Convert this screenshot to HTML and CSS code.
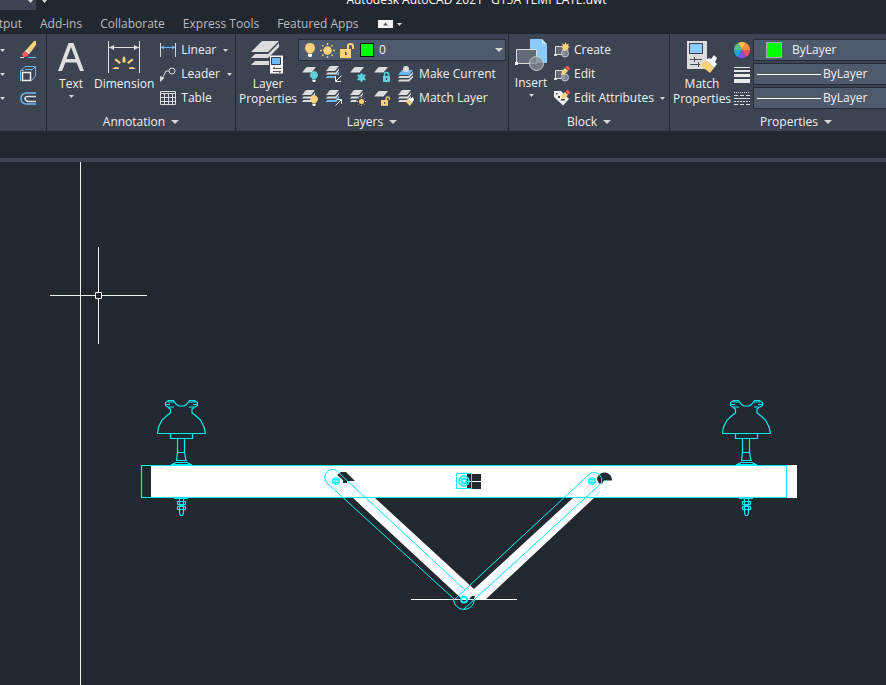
FILE: index.html
```html
<!DOCTYPE html>
<html lang="en">
<head>
<meta charset="utf-8">
<title>Autodesk AutoCAD 2021 - G15A TEMPLATE.dwt</title>
<link rel="stylesheet" href="styles.css">
</head>
<body>
<svg class="defs" aria-hidden="true">
  <symbol id="down" viewBox="0 0 5 3" preserveAspectRatio="none"><path d="M0 0h5L2.500 3z" fill="#d8d8d8"/></symbol>
  <symbol id="sheets" viewBox="0 0 16 16">
    <path d="M4 0h9L9 5H0z" fill="#dcdcdc"/>
    <path d="M0 8.500L1.500 6.500H9.500L13 2.500V4.500L10 8.500zM0 12L1.500 10H9.500L13 6V8L10 12z" fill="#dcdcdc"/>
  </symbol>
  <symbol id="sheet" viewBox="0 0 16 16"><path d="M4.500 1h9.500L9.500 6.500H0z" fill="#dcdcdc"/></symbol>
  <symbol id="bulb" viewBox="0 0 10 14"><path d="M5 0a5 5 0 0 1 3 9L7 10.500H3L2 9A5 5 0 0 1 5 0z" fill="currentColor"/><path d="M3 11h4v2L6 14H4L3 13z" fill="#fff"/></symbol>
  <symbol id="sun" viewBox="0 0 16 16"><circle cx="8" cy="8" r="4.500" fill="#ffd27a"/><path d="M8 0v2M8 14v2M0 8h2M14 8h2M2.500 2.500l1.200 1.200M12.300 12.300l1.200 1.200M13.500 2.500l-1.200 1.200M3.700 12.300l-1.200 1.200" stroke="#ffd27a" stroke-width="1.500"/></symbol>
  <symbol id="unlock" viewBox="0 0 14 15"><path d="M8 7V3q0-2 2.500-2T13 3v3" fill="none" stroke="#ffd27a" stroke-width="2"/><path d="M0 6h11v9H0z" fill="#ffd27a"/><path d="M5 9h1.500v3H5z" fill="#3c4452"/></symbol>
  <symbol id="block" viewBox="0 0 16 16"><path d="M1.500 4.500h9v8h-9z" fill="#646b78" stroke="#dcdcdc"/><path d="M0 12h3v2H0z" fill="#dcdcdc"/><circle cx="11" cy="11.500" r="3.500" fill="#858c97" fill-opacity=".8" stroke="#c8cbd0"/></symbol>
  <symbol id="pencil" viewBox="0 0 9 9"><path d="M0 9l1-4 3-3 3 3-3 3z" fill="#ffd27a"/><path d="M4.500 1.500L6 0h1l2 2v1L7.500 4.500z" fill="#ff5b5b"/></symbol>
  <symbol id="insulator" viewBox="157 399 50 118">
    <g fill="none" stroke="#00f0f5" stroke-width="1.200">
      <path d="M157.500 433.500L158.500 427L162 420L167 415.500L170.500 413V409L168 407.500M205.500 433.500L204 427L200.500 420L195.500 415.500L192 413V409L194 407.500M157.500 433.500H205.500"/>
      <path d="M174 407H168L165.500 405.500V402.500L168.500 400.500H173.500L176.500 404.500L179 406H184L186.500 404.500L189.500 400.500H194.500L197.500 402.500V405.500L195 407H189M166 404.500H170M193 404.500H197M168 402H174M189 402H195"/>
      <path d="M170.500 433.500V438.500H192.500V433.500M177.500 438V452L176.500 461M184.500 438V452L186 461M177 452.500H185M176 460.500H187M172 464.500L176 462.500H187L191 464.500M171 464.500H192"/>
      <path d="M174 498.500H188M179.500 498V513L180.500 515.500H182.500L183.500 513V498M177.500 501.500H185.500V504.500H177.500zM177.500 506.500H185.500V509.500H177.500zM179 505.500H184"/>
    </g>
  </symbol>
</svg>

<header class="titlebar">
  <div class="quick"><svg class="caret" aria-hidden="true"><use href="#down"/></svg></div>
  <svg class="caret more" aria-hidden="true"><use href="#down"/></svg>
  <div class="title"><span>Autodesk AutoCAD 2021</span><span>G15A TEMPLATE.dwt</span></div>
</header>

<nav class="tabs">
  <a href="#">Output</a><a href="#">Add-ins</a><a href="#">Collaborate</a><a href="#">Express Tools</a><a href="#">Featured Apps</a>
  <button class="minimize" aria-label="Minimize ribbon"><svg width="15" height="8"><path d="M0 0h15v8H0z" fill="#f2f2f2"/><path d="M5 5.500h5L7.500 2.500z" fill="#555"/></svg><svg class="caret"><use href="#down"/></svg></button>
</nav>

<main class="ribbon">
  <section class="panel modify">
    <div class="tools">
      <div class="column">
        <button class="small" aria-label="Erase"><svg class="caret"><use href="#down"/></svg><svg width="17" height="18" viewBox="0 0 17 18"><path d="M6 9L14 0h2v4L10 12z" fill="#ffd27a"/><path d="M3 12l2-2 4 3-2 2.500-3 .5-2-2z" fill="#ff5b5b"/><path d="M5 10l1-1 4 3-1 1z" fill="#fff"/><path d="M0 16.500h4" stroke="#dcdcdc"/><path d="M8 16.500h8" stroke="#6db9f5"/></svg></button>
        <button class="small" aria-label="Explode"><svg class="caret"><use href="#down"/></svg><svg width="17" height="16" viewBox="0 0 17 16"><path d="M.500 15V5L5 .500H15.500V10L11.500 14.500M.500 4.500H4M11.500 4.500L15.500 .500M5 3.500H12" fill="none" stroke="#6db9f5"/><path d="M2.500 6.500h8v8h-8z" fill="none" stroke="#eee" stroke-width="1.500"/></svg></button>
        <button class="small" aria-label="Offset"><svg class="caret"><use href="#down"/></svg><svg width="17" height="13" viewBox="0 0 17 13"><path d="M16 1H7Q1 1 1 6.500T7 12H16" fill="none" stroke="#6db9f5" stroke-width="1.500"/><path d="M16 4.500H8Q5 4.500 5 6.500T8 9.500H16" fill="none" stroke="#dcdcdc" stroke-width="1.500"/></svg></button>
      </div>
    </div>
  </section>

  <section class="panel annotation">
    <div class="tools">
      <button class="big"><svg width="34" height="36" viewBox="0 0 34 36"><path d="M4 33L14.500 5h5L30 33h-4L22.500 24.500h-11L8 33zM12.500 21h9L17 9z" fill="#dedede"/></svg><span>Text</span><svg class="caret"><use href="#down"/></svg></button>
      <button class="big"><svg width="34" height="36" viewBox="0 0 34 36"><path d="M1.500 3v32M32.500 3v32M2 9.500h30" stroke="#dcdcdc" fill="none"/><path d="M2 9.500l5-2.500v5zM32 9.500l-5-2.500v5z" fill="#dcdcdc"/><path d="M15.500 24.500v-4L17 18l1.500 2.500v4zM12.500 26l-5-4 1.500-1.500 5 4zM21.500 26l5-4-1.500-1.500-5 4zM5 31l3-2 4 .5V31zM29 31l-3-2-4 .5V31z" fill="#ffd27a"/></svg><span>Dimension</span></button>
      <div class="column">
        <button class="small"><svg width="16" height="16"><path d="M.500 1v14M15.500 1v14" stroke="#dcdcdc"/><path d="M1 5.500h14" stroke="#6db9f5"/><path d="M1 5.500l3-2v4zM15 5.500l-3-2v4z" fill="#6db9f5"/></svg><span>Linear</span><svg class="caret"><use href="#down"/></svg></button>
        <button class="small"><svg width="16" height="16"><circle cx="12" cy="5" r="3" fill="none" stroke="#dcdcdc"/><path d="M9 5H6L2.500 12" fill="none" stroke="#dcdcdc"/><path d="M0 16V10l4.500 2z" fill="#dcdcdc"/></svg><span>Leader</span><svg class="caret"><use href="#down"/></svg></button>
        <button class="small"><svg width="16" height="16"><path d="M.500 1.500h15v13H.500zM0 3.500h16M0 7.500h16M0 11.500h16M4.500 4v11M8.500 4v11M12.500 4v11" fill="none" stroke="#dcdcdc"/></svg><span>Table</span></button>
      </div>
    </div>
    <h2>Annotation<svg><use href="#down"/></svg></h2>
  </section>

  <section class="panel layers">
    <div class="tools">
      <button class="big"><svg width="36" height="36" viewBox="0 0 36 36"><path d="M12 3h17L18 14H1z" fill="#dcdcdc"/><path d="M1 20l4-4h13L29 5v4L18 20zM1 27l4-4h14v4z" fill="#dcdcdc"/><path d="M20 17.500h13v18H20z" fill="#f5f5f5"/><path d="M21.500 19.500h9v7h-9z" fill="#6fb7f7" stroke="#333b48"/><path d="M23 30.500h8M23 33.500h8M25 29l-2 1.500M29 35l2-1.500" stroke="#555"/></svg><span>Layer<br>Properties</span></button>
      <div class="column">
        <label class="combo layer"><svg class="yellow" width="10" height="14"><use href="#bulb"/></svg><svg width="15" height="15"><use href="#sun"/></svg><svg width="14" height="15"><use href="#unlock"/></svg><i class="swatch"></i><select aria-label="Current layer"><option>0</option></select><svg width="8" height="4"><use href="#down"/></svg></label>
        <div class="line">
          <button class="small" aria-label="Layer off"><svg width="16" height="16"><use href="#sheet"/><svg class="cyan" x="8" y="5" width="8" height="11"><use href="#bulb"/></svg></svg></button>
          <button class="small" aria-label="Isolate"><svg width="16" height="16"><use href="#sheets"/><path d="M0 12l1.500-2h8L13 6v2l-3 4z" fill="#6db9f5"/><path d="M9 9h7v7H9z" fill="#3c4452"/><path d="M15.500 9.500L10 15M9.500 10v5.500H15" fill="none" stroke="#fff"/></svg></button>
          <button class="small" aria-label="Freeze"><svg width="16" height="16"><use href="#sheet"/><g stroke="#5fd0dc" stroke-width="1.500" fill="none"><circle cx="11.500" cy="11.500" r="2.500"/><path d="M11.500 7v9M7.500 9l8 5M15.500 9l-8 5"/></g></svg></button>
          <button class="small" aria-label="Lock"><svg width="16" height="16"><use href="#sheet"/><path d="M10.500 10V8q0-1.500 2-1.500t2 1.500v2" fill="none" stroke="#5fd0dc" stroke-width="1.500"/><path d="M9 10h7v6H9z" fill="#5fd0dc"/><path d="M12 12h1v2h-1z" fill="#333b48"/></svg></button>
          <button class="small"><svg width="16" height="16"><path d="M4 4h11l-4 5H0z" fill="#6db9f5"/><path d="M0 12l1.500-2h9L15 6v2l-4 4zM0 15.500l1.500-2h9L15 9.500v2l-4 4z" fill="#dcdcdc"/><circle cx="8" cy="3" r="3" fill="#dcdcdc"/></svg><span>Make Current</span></button>
        </div>
        <div class="line">
          <button class="small" aria-label="Turn all on"><svg width="16" height="16"><use href="#sheets"/><svg class="yellow" x="8" y="5" width="8" height="11"><use href="#bulb"/></svg></svg></button>
          <button class="small" aria-label="Unisolate"><svg width="16" height="16"><use href="#sheets"/><path d="M0 12l1.500-2h8L13 6v2l-3 4z" fill="#6db9f5"/><path d="M9.500 15.500L15 10M11 9.500h4.500V14" fill="none" stroke="#fff"/></svg></button>
          <button class="small" aria-label="Thaw"><svg width="16" height="16"><use href="#sheets"/><circle cx="11.500" cy="11.500" r="5" fill="#3c4452"/><svg x="7" y="7" width="9" height="9"><use href="#sun"/></svg></svg></button>
          <button class="small" aria-label="Unlock"><svg width="16" height="16"><use href="#sheet"/><svg x="7" y="6" width="9" height="10"><use href="#unlock"/></svg></svg></button>
          <button class="small"><svg width="16" height="16"><use href="#sheets"/><path d="M12 9l3-2 1 3-2 2z" fill="#fff"/><path d="M7 11l3-2 4 4-2 3z" fill="#ffd27a"/><path d="M10 9l2-1 3 4-1 1z" fill="#fff"/></svg><span>Match Layer</span></button>
        </div>
      </div>
    </div>
    <h2>Layers<svg><use href="#down"/></svg></h2>
  </section>

  <section class="panel blocks">
    <div class="tools">
      <button class="big"><svg width="34" height="35" viewBox="0 0 34 35"><path d="M16 1h12v5h5v19H16z" fill="#8accff"/><path d="M28 1l5 5h-5z" fill="#c7e6ff"/><path d="M2.500 11.500h20v14h-20z" fill="#646b78" stroke="#dcdcdc"/><path d="M1 24h3v3H1z" fill="#eee"/><circle cx="22.500" cy="25.500" r="7" fill="#858c97" fill-opacity=".75" stroke="#c8cbd0"/></svg><span>Insert</span><svg class="caret"><use href="#down"/></svg></button>
      <div class="column">
        <button class="small"><svg width="16" height="16"><use href="#block"/><path d="M11.500 0l1 2.500L15 1.500l-1 2.500 2 1-2 1 .5 2.500-2-1-1 1.500-1-1.500L8 8.500 9 6 7 5l2-1-1-2.500 2.500 1z" fill="#ffd27a"/></svg><span>Create</span></button>
        <button class="small"><svg width="16" height="16"><use href="#block"/><svg x="7" y="0" width="9" height="9"><use href="#pencil"/></svg></svg><span>Edit</span></button>
        <button class="small"><svg width="16" height="16"><path d="M0 1h7l8 8-6 6.500L0 7z" fill="#eee"/><path d="M2 3h1.500v1.500H2zM4 6h2v2H4zM7 9h4v1.500H7z" fill="#3c4452"/><svg x="7" y="0" width="9" height="9"><use href="#pencil"/></svg></svg><span>Edit Attributes</span><svg class="caret"><use href="#down"/></svg></button>
      </div>
    </div>
    <h2>Block<svg><use href="#down"/></svg></h2>
  </section>

  <section class="panel properties">
    <div class="tools">
      <button class="big"><svg width="34" height="36" viewBox="0 0 34 36"><path d="M2 3h20v28H2z" fill="#dcdcdc"/><path d="M4.500 5.500h13v10h-13z" fill="#8accff" stroke="#333b48"/><path d="M5 21.500h12M5 26.500h10M9.500 19v5M13.500 24v5" stroke="#444c59"/><path d="M15 27l6-5 8 8-4 5z" fill="#ffd27a"/><path d="M21 22l3-2 2 1 3-4 3 3-2 4 2 2-3 4z" fill="#f5f5f5"/></svg><span>Match<br>Properties</span></button>
      <div class="column icons">
        <svg width="16" height="16"><path d="M8 8L4 1a8 8 0 0 1 8 0z" fill="#ffc043"/><path d="M8 8l4-7a8 8 0 0 1 4 7z" fill="#ff8c3c"/><path d="M8 8h8a8 8 0 0 1-4 7z" fill="#e8525a"/><path d="M8 8l4 7a8 8 0 0 1-8 0z" fill="#8a4df5"/><path d="M8 8l-4 7a8 8 0 0 1-4-7z" fill="#1fa5d8"/><path d="M8 8H0a8 8 0 0 1 4-7z" fill="#4cc38a"/></svg>
        <svg width="16" height="16"><path d="M0 0h16v1H0zM0 3h16v2H0zM0 7h16v3H0zM0 12h16v4H0z" fill="#e8e8e8"/></svg>
        <svg width="16" height="14"><g stroke="#dcdcdc"><path d="M0 .500h16" stroke-dasharray="1 1"/><path d="M0 3.500h16" stroke-dasharray="4 2"/><path d="M0 6.500h16"/><path d="M0 9.500h16" stroke-dasharray="2 1"/><path d="M0 12.500h16" stroke-dasharray="4 2"/></g></svg>
      </div>
      <div class="column combos">
        <label class="combo color"><i class="swatch"></i><select aria-label="Object color"><option>ByLayer</option></select></label>
        <label class="combo"><i class="stroke"></i><select aria-label="Lineweight"><option>ByLayer</option></select></label>
        <label class="combo"><i class="stroke"></i><select aria-label="Linetype"><option>ByLayer</option></select></label>
      </div>
    </div>
    <h2>Properties<svg><use href="#down"/></svg></h2>
  </section>
</main>

<div class="divider"></div>

<section class="canvas" aria-label="Drawing">
  <svg viewBox="0 162 886 523" preserveAspectRatio="xMinYMin meet">
    <path d="M80.500 162V685M50 295.500H147M98.500 247V344" stroke="#eef0f0"/>
    <path d="M95.500 292.500h6v6h-6z" fill="#222830" stroke="#fff"/>
    <path d="M151 465H797V498H594L485 600H463L353 498H151z" fill="#fff"/>
    <path d="M375 498H573L474 589z" fill="#222830"/>
    <path d="M337 475l4-3h5l9 9h-8v2h-4v-3zM597 479.500a7.500 7.500 0 0 1 15 1h-8l-2 3h-3z" fill="#222830"/>
    <path d="M467 474h14v15h-14z" fill="#222830"/><path d="M460 481.500h21" stroke="#fff"/>
    <path d="M469 599l3-3h3l-1 3z" fill="#222830"/>
    <path d="M411 599.500H517" stroke="#fff"/>
    <g fill="none" stroke="#00f5fa">
      <path d="M141.500 465.500H786.500V497.500H141.500z" stroke-width="1.200"/>
      <path d="M327 483L454 599M340 474L465 590M327 483A8 8 0 1 1 340 474"/>
      <path d="M455 599L590 473.500M464 609L601.500 483M590 473.500A8 8 0 0 1 601.500 483"/>
      <path d="M453.500 599A10.500 10.500 0 0 0 474.500 599"/>
      <circle cx="464" cy="599.500" r="3" stroke-width="2"/>
      <path d="M456.500 473.500h15v15h-15z"/><circle cx="464" cy="481" r="5" stroke-width="1.500"/><circle cx="464" cy="481" r="2.500" stroke-width="2"/>
      <circle cx="336" cy="481" r="3.500" fill="#7df3f6"/><circle cx="592" cy="481" r="3.500" fill="#7df3f6"/><path d="M332 479.500h8M332 482.500h8M588 479.500h8M588 482.500h8"/>
    </g>
    <use href="#insulator" x="157" y="399" width="50" height="118"/>
    <use href="#insulator" x="722" y="399" width="50" height="118"/>
  </svg>
</section>
</body>
</html>
```

FILE: styles.css
```css
* { box-sizing: border-box; }

body {
  margin: 0;
  min-height: 100vh;
  display: flex;
  flex-direction: column;
  overflow: hidden;
  background: #222830;
  color: #f0f0f0;
  font: 12px/14px "Open Sans", "Noto Sans", sans-serif;
}

button, select { font: inherit; color: inherit; background: none; border: 0; padding: 0; margin: 0; }
svg { flex: none; display: block; }
.defs { position: absolute; width: 0; height: 0; }
.caret { width: 5px; height: 3px; }
.yellow { color: #ffd27a; }
.cyan { color: #5fd0dc; }

.titlebar { display: flex; height: 10px; align-items: flex-start; }
.quick { width: 36px; height: 10px; padding-left: 28px; background: #3c4452; }
.more { margin-left: 6px; }
.title {
  flex: 1;
  height: 8px;
  display: flex;
  justify-content: center;
  align-items: flex-end;
  gap: 8px;
  padding-left: 20px;
  line-height: 16px;
  color: #fff;
}

.tabs { display: flex; align-items: center; gap: 18px; height: 24px; padding-top: 4px; margin-left: -18px; }
.tabs a { color: #b9bcc0; text-decoration: none; }
.minimize { display: flex; align-items: center; gap: 4px; margin-left: 2px; }

.ribbon { display: grid; grid-template-columns: 46px 188px 272px 160px 1fr; gap: 1px; }
.panel { background: #3c4452; display: flex; flex-direction: column; min-width: 0; overflow: hidden; }
.tools { display: flex; height: 78px; padding-top: 4px; }
.panel h2 { margin: 0; display: flex; justify-content: center; align-items: center; gap: 6px; font: inherit; line-height: 19px; }
.panel h2 svg { width: 8px; height: 4px; }

.big { display: flex; flex-direction: column; align-items: center; line-height: 15px; }
.big span { margin-top: 2px; }
.big .caret { margin-top: 4px; }
.column { display: flex; flex-direction: column; }
.small { display: flex; align-items: center; height: 24px; gap: 5px; white-space: nowrap; }
.small .caret { margin-left: 2px; }
.line { display: flex; gap: 8px; padding-left: 4px; }

.modify .small { gap: 15px; }
.modify .small .caret { margin-left: 0; }

.annotation .tools { padding-left: 7px; gap: 6px; }
.annotation .big { min-width: 32px; }
.layers .tools { padding-left: 3px; gap: 1px; }
.blocks .tools { padding-left: 5px; gap: 6px; }
.blocks .small { gap: 4px; }
.properties .tools { padding-left: 3px; gap: 3px; }
.properties h2 { padding-left: 36px; }

.combo { display: flex; align-items: center; height: 22px; margin: 1px 0; border: 1px solid #262c36; background: #4f5a6d; }
.combo select { appearance: none; flex: 1; min-width: 0; }
.swatch { background: #00ff00; border: 1px solid #111; width: 14px; height: 14px; }
.layer { width: 208px; gap: 5px; padding: 0 2px 0 6px; }
.layer .swatch { margin-left: 1px; }

.icons { height: 72px; justify-content: space-around; }
.combos { flex: 1; }
.combos .combo { border-right: 0; padding-left: 3px; }
.combos .color { padding-left: 12px; gap: 10px; }
.color .swatch { width: 16px; height: 16px; border-color: #aaa; }
.stroke { width: 64px; height: 1px; margin-right: 2px; background: #fff; }

.divider { height: 4px; margin-top: 27px; background: #3c4452; }

.canvas { flex: 1; }
.canvas svg { width: 100%; }
```
